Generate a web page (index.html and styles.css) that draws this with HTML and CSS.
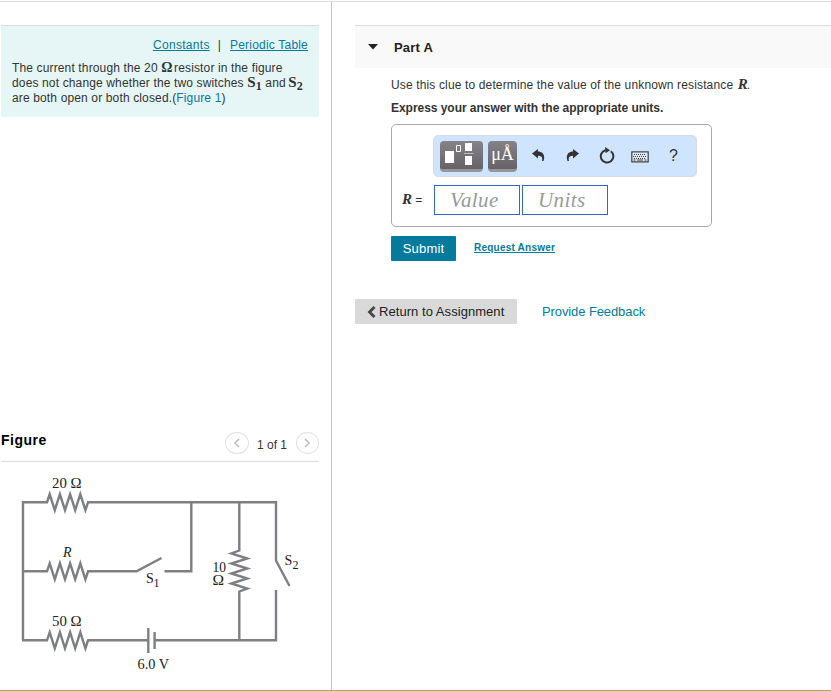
FILE: index.html
```
<!DOCTYPE html>
<html lang="en">
<head>
    <meta charset="UTF-8">
    <meta name="viewport" content="width=device-width, initial-scale=1.0">
    <title>Part A</title>
    <link rel="stylesheet" href="styles.css">
</head>
<body>
    <div class="page">
        <div class="left">
            <div class="intro">
                <div class="links">
                    <a class="constants" href="#">Constants</a><span class="bar">|</span><a href="#">Periodic Table</a>
                </div>
                <p class="problem">
                    <span class="line line-1">The current through the 20 <span class="math omega">Ω</span> resistor in the figure</span>
                    <span class="line line-2">does not change whether the two switches <span class="math">S<sub>1</sub></span> and <span class="math s2">S<sub>2</sub></span></span>
                    <span class="line line-3">are both open or both closed.(<a href="#">Figure 1</a>)</span>
                </p>
            </div>

            <div class="figure-header">
                <h2>Figure</h2>
                <button class="round" aria-label="Previous">
                    <svg width="8" height="10" viewBox="0 0 8 10"><path d="M6 1L2 5l4 4"/></svg>
                </button>
                <span class="count">1 of 1</span>
                <button class="round" aria-label="Next">
                    <svg width="8" height="10" viewBox="0 0 8 10"><path d="M2 1l4 4-4 4"/></svg>
                </button>
            </div>

            <svg class="circuit" width="330" height="228" viewBox="0 462 330 228">
                <g class="wire">
                    <!-- top branch -->
                    <path d="M23 640.3V502.2H47l2.7-8 5.1 16 5.1-16 5.1 16 5.1-16 5.1 16 5.1-16 5.1 16 2.7-8H276V560.5l13.500 25.500"/>
                    <!-- middle branch -->
                    <path d="M23 571.3H47l2.7-8 5.1 16 5.1-16 5.1 16 5.1-16 5.1 16 5.1-16 5.1 16 2.7-8H136.500L161.500 558"/>
                    <path d="M164.500 571.300H191.300V502.200"/>
                    <!-- bottom branch with battery -->
                    <path d="M22 640.300H47l2.7-8 5.1 16 5.1-16 5.1 16 5.1-16 5.1 16 5.1-16 5.1 16 2.7-8H148M155 640.300H276V590"/>
                    <path d="M148.300 628v25M154.600 632v17"/>
                    <!-- 10 ohm resistor -->
                    <path d="M239.300 502.200V550.500l-8 3 16 5-16 5 16 5-16 5 16 5-16 5 16 5-8 3V640.300"/>
                </g>
                <g class="label">
                    <text x="52" y="488" textLength="29.500" lengthAdjust="spacingAndGlyphs">20 Ω</text>
                    <text x="63" y="557" font-style="italic">R</text>
                    <text x="52" y="626" textLength="29.500" lengthAdjust="spacingAndGlyphs">50 Ω</text>
                    <text x="137.500" y="669" textLength="31.500" lengthAdjust="spacingAndGlyphs">6.0 V</text>
                    <text x="146" y="583">S</text>
                    <text class="sub" x="153.500" y="586.500">1</text>
                    <text x="212.500" y="572" textLength="13.500" lengthAdjust="spacingAndGlyphs">10</text>
                    <text x="212.500" y="585" textLength="11.500" lengthAdjust="spacingAndGlyphs">Ω</text>
                    <text x="284.500" y="565">S</text>
                    <text class="sub" x="292.500" y="568.500">2</text>
                </g>
            </svg>
        </div>

        <div class="right">
            <div class="part-header">
                <svg width="10" height="6" viewBox="0 0 10 6"><path d="M0 0h10L5 5.500z" fill="#222"/></svg>
                <h1>Part A</h1>
            </div>

            <div class="part-body">
                <p class="question">Use this clue to determine the value of the unknown resistance <span class="math var">R</span>.</p>
                <p class="hint">Express your answer with the appropriate units.</p>

                <div class="answer">
                    <div class="toolbar">
                        <button class="tool templates" aria-label="Templates">
                            <svg width="43" height="28" viewBox="0 0 43 28">
                                <path fill="#fff" d="M5 10h9v12H5zM25 2h7v8h-7zM25 15h7v9h-7z"/>
                                <path fill="none" stroke="#fff" d="M16.500 4.500h4v6h-4z"/>
                                <path stroke="#bbb" d="M24 12.500h9.500"/>
                            </svg>
                        </button>
                        <button class="tool units">μÅ</button>
                        <svg class="undo" width="13" height="12" viewBox="0 0 13 12"><path fill="#333" d="M0 4.500L6 0v2.500c5 0 7.500 4 5.500 9.500H10C11 8.500 9.500 6.800 6 6.800V9.500z"/></svg>
                        <svg class="redo" width="13" height="12" viewBox="0 0 13 12"><path fill="#333" d="M13 4.500L7 0v2.500C2 2.500-.5 6.500 1.500 12H3C2 8.500 3.500 6.800 7 6.800V9.500z"/></svg>
                        <svg class="reset" width="16" height="17" viewBox="0 0 16 17">
                            <path fill="none" stroke="#333" stroke-width="2" d="M11.800 4.200A6.300 6.300 0 1 1 6.500 3.200"/>
                            <path fill="#333" d="M6 0l5 3.200-4.500 3z"/>
                        </svg>
                        <svg class="keyboard" width="18" height="12" viewBox="0 0 18 12">
                            <path fill="#dce9f5" stroke="#444" stroke-width="1.200" d="M.8.800h16.400v10H.8z"/>
                            <path stroke="#444" stroke-dasharray="1 1" d="M3 3.500h12M2 5.500h13M3 7.500h12"/>
                            <path stroke="#444" d="M2.500 9h2M6 9h6M13.500 9h2"/>
                        </svg>
                        <span class="help">?</span>
                    </div>
                    <div class="fields">
                        <label><span class="math var">R</span> =</label>
                        <div class="field value">Value</div>
                        <div class="field unit">Units</div>
                    </div>
                </div>

                <div class="actions">
                    <button class="submit">Submit</button>
                    <a class="request" href="#">Request Answer</a>
                </div>
            </div>

            <div class="footer">
                <button class="return">
                    <svg width="9" height="12" viewBox="0 0 9 12"><path fill="none" stroke="#444" stroke-width="2.800" d="M7.500 1L2.500 6l5 5"/></svg>
                    <span>Return to Assignment</span>
                </button>
                <a class="feedback" href="#">Provide Feedback</a>
            </div>
        </div>
    </div>
</body>
</html>
```
FILE: styles.css
```
* {
    box-sizing: border-box;
}
body {
    margin: 0;
    background-color: #fff;
    color: #333;
    font-family: "Liberation Sans", Arial, sans-serif;
    font-size: 12px;
    overflow: hidden;
}
h1, h2, p {
    margin: 0;
}
a {
    color: #047a9c;
}
button {
    border: none;
    padding: 0;
    font-family: inherit;
    cursor: pointer;
}
svg {
    display: block;
    flex: none;
}
.page {
    display: flex;
    height: 691px;
    padding-top: 1px;
    background: linear-gradient(#dcdfdf, #dcdfdf) 0 1px / 100% 1px no-repeat;
    border-bottom: 1px solid #c1a15c;
}
.math {
    font-family: "Liberation Serif", "Times New Roman", serif;
    font-weight: bold;
    font-size: 15px;
    line-height: 0;
}
.var {
    font-style: italic;
}

/* Left column */
.left {
    display: flex;
    flex-direction: column;
    width: 332px;
    flex: none;
    margin-top: 1px;
    padding-top: 23px;
    border-right: 1px solid #c0c4d6;
}
.intro {
    width: 318px;
    height: 92px;
    margin-left: 1px;
    padding: 12px 11px 0;
    background-color: #e6f6f6;
    border-top: 1px solid #dadddd;
}
.links {
    display: flex;
    justify-content: flex-end;
    height: 23px;
    line-height: 14px;
    letter-spacing: 0.2px;
}
.constants {
    letter-spacing: 0.3px;
}
.bar {
    margin: 0 9px 0 8px;
}
.problem, .line {
    display: block;
    line-height: 15px;
    white-space: nowrap;
}
.line {
    height: 15px;
    letter-spacing: 0.14px;
}
.line a {
    text-decoration: none;
}
.omega {
    margin-right: -2px;
    font-size: 14px;
}
.s2 {
    margin-left: -1px;
}
sub {
    font-size: 12px;
    line-height: 0;
    vertical-align: -3px;
}
.figure-header {
    display: flex;
    align-items: center;
    width: 318px;
    height: 36px;
    margin: 309px 0 0 1px;
    border-bottom: 1px solid #dcdcdc;
}
.figure-header h2 {
    flex: 1;
    padding-bottom: 7px;
    color: #000;
    font-size: 14px;
    letter-spacing: 0.5px;
}
.count {
    width: 47px;
    padding-top: 2px;
    text-align: center;
}
.round {
    display: flex;
    align-items: center;
    justify-content: center;
    width: 23.5px;
    height: 22px;
    margin-bottom: 1px;
    background: #fff;
    border: 1px solid #e2e2e2;
    border-radius: 50%;
}
.round path {
    fill: none;
    stroke: #bbb;
    stroke-width: 1.5;
}
.wire path {
    fill: none;
    stroke: #7d7f82;
    stroke-width: 2.4;
}
.label {
    fill: #222;
    font-family: "Liberation Serif", "Times New Roman", serif;
    font-size: 14px;
}
.label .sub {
    font-size: 12px;
}

/* Right column */
.right {
    flex: 1;
    padding: 24px 0 0 23px;
}
.part-header {
    display: flex;
    align-items: center;
    gap: 16px;
    height: 43px;
    padding-left: 13px;
    background-color: #f9f9f9;
    border-top: 1px solid #dadddd;
}
h1 {
    color: #222;
    font-size: 13px;
    letter-spacing: 0.2px;
}
.part-body {
    padding: 9px 0 0 36px;
}
.question, .hint {
    height: 23px;
    line-height: 16px;
    white-space: nowrap;
}
.question {
    letter-spacing: 0.14px;
}
.question .var {
    margin: 0 -1px 0 1px;
}
.hint {
    font-weight: bold;
    letter-spacing: -0.04px;
}
.answer {
    width: 321px;
    height: 103px;
    margin-top: 1px;
    padding: 10px 0 0 10px;
    border: 1px solid #aaa;
    border-radius: 5px;
}
.toolbar {
    display: flex;
    align-items: center;
    width: 264px;
    height: 42px;
    margin-left: 31px;
    padding-left: 6px;
    background-color: #cfe5ff;
    border: 1px solid #d8dadd;
    border-radius: 5px;
}
.tool {
    height: 31px;
    margin-right: 5px;
    background: linear-gradient(#858388, #666367);
    border-bottom: 3px solid #98949c;
    border-radius: 4px;
    color: #fff;
}
.templates {
    width: 43px;
}
.units {
    width: 29px;
    font-family: "Liberation Serif", "Times New Roman", serif;
    font-size: 18px;
}
.undo {
    margin: 0 21px 2px 10px;
}
.redo {
    margin: 0 20px 2px 0;
}
.reset {
    margin: 0 16px 2px 0;
}
.keyboard {
    margin: 2px 20px 0 0;
}
.help {
    font-size: 16px;
}
.fields {
    display: flex;
    align-items: center;
    height: 30px;
    margin-top: 8px;
}
.fields label {
    width: 32px;
    white-space: nowrap;
}
.field {
    width: 86px;
    height: 30px;
    margin-right: 2px;
    padding-left: 15px;
    border: 1px solid #36c;
    color: #999;
    font: italic 21px/28px "Liberation Serif", "Times New Roman", serif;
    letter-spacing: 0.4px;
}
.actions {
    display: flex;
    align-items: center;
    gap: 18px;
    margin-top: 9px;
}
.submit {
    width: 65px;
    height: 25px;
    background-color: #047a9c;
    border-radius: 1px;
    color: #fff;
    font-size: 13px;
    letter-spacing: 0.2px;
}
.request {
    padding-bottom: 2px;
    font: bold 10px "Liberation Sans", Arial, sans-serif;
    letter-spacing: 0.22px;
}
.footer {
    display: flex;
    align-items: center;
    gap: 25px;
    margin-top: 38px;
    font-size: 13px;
}
.return {
    display: flex;
    align-items: center;
    gap: 3px;
    width: 162px;
    height: 25px;
    padding-left: 12px;
    background-color: #d9d9d9;
    border-radius: 1px;
    color: #222;
    font-size: 13px;
    letter-spacing: 0.05px;
    white-space: nowrap;
}
.feedback {
    letter-spacing: -0.1px;
    text-decoration: none;
}
```
